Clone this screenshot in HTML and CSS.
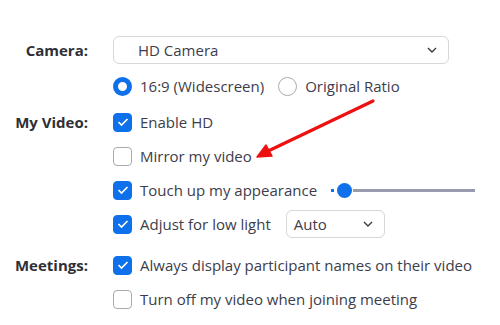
FILE: index.html
```html
<!DOCTYPE html>
<html lang="en">
<head>
    <meta charset="UTF-8">
    <meta name="viewport" content="width=device-width, initial-scale=1.0">
    <title>Video settings</title>
    <link rel="stylesheet" href="styles.css">
</head>
<body class="body">
    <div class="settings">
        <div class="settings__label settings__label_select">Camera:</div>
        <div class="settings__controls">
            <div class="select select_camera">
                <span class="select__value">HD Camera</span>
                <svg class="select__caret" width="10" height="6" viewBox="0 0 10 6"><path d="M1 1 L5 5 L9 1" fill="none" stroke="#3b3b46" stroke-width="1.4"/></svg>
            </div>
            <div class="ratio">
                <label class="option option_radio">
                    <span class="radio radio_checked"></span>
                    <span class="option__text">16:9 (Widescreen)</span>
                </label>
                <label class="option option_radio">
                    <span class="radio"></span>
                    <span class="option__text">Original Ratio</span>
                </label>
            </div>
        </div>

        <div class="settings__label">My Video:</div>
        <div class="settings__controls settings__controls_list">
            <label class="option">
                <span class="check check_on"><svg width="12" height="10" viewBox="0 0 12 10"><path d="M1.5 5 L4.5 8 L10.5 2" fill="none" stroke="#fff" stroke-width="1.6"/></svg></span>
                <span class="option__text">Enable HD</span>
            </label>
            <label class="option">
                <span class="check"></span>
                <span class="option__text">Mirror my video</span>
            </label>
            <label class="option">
                <span class="check check_on"><svg width="12" height="10" viewBox="0 0 12 10"><path d="M1.5 5 L4.5 8 L10.5 2" fill="none" stroke="#fff" stroke-width="1.6"/></svg></span>
                <span class="option__text">Touch up my appearance</span>
                <span class="slider">
                    <span class="slider__fill"></span>
                    <span class="slider__thumb"></span>
                    <span class="slider__track"></span>
                </span>
            </label>
            <label class="option">
                <span class="check check_on"><svg width="12" height="10" viewBox="0 0 12 10"><path d="M1.5 5 L4.5 8 L10.5 2" fill="none" stroke="#fff" stroke-width="1.6"/></svg></span>
                <span class="option__text">Adjust for low light</span>
                <span class="select select_small">
                    <span class="select__value">Auto</span>
                    <svg class="select__caret" width="10" height="6" viewBox="0 0 10 6"><path d="M1 1 L5 5 L9 1" fill="none" stroke="#3b3b46" stroke-width="1.4"/></svg>
                </span>
            </label>
        </div>

        <div class="settings__label settings__label_meetings">Meetings:</div>
        <div class="settings__controls settings__controls_list settings__controls_meetings">
            <label class="option">
                <span class="check check_on"><svg width="12" height="10" viewBox="0 0 12 10"><path d="M1.5 5 L4.5 8 L10.5 2" fill="none" stroke="#fff" stroke-width="1.6"/></svg></span>
                <span class="option__text">Always display participant names on their video</span>
            </label>
            <label class="option">
                <span class="check"></span>
                <span class="option__text">Turn off my video when joining meeting</span>
            </label>
        </div>
    </div>

    <svg class="arrow" width="500" height="325" viewBox="0 0 500 325">
        <line x1="373" y1="101" x2="264" y2="153" stroke="#ee1111" stroke-width="3.2" stroke-linecap="round"/>
        <path d="M257 157 L266 145 L272 156 Z" fill="#ee1111" stroke="#ee1111" stroke-width="1.5" stroke-linejoin="round"/>
    </svg>
</body>
</html>
```

FILE: styles.css
```css
* {
    margin: 0;
    padding: 0;
    box-sizing: border-box;
}

.body {
    width: 500px;
    height: 325px;
    overflow: hidden;
    background: #fff;
    font-family: "Open Sans", "Noto Sans", sans-serif;
    font-size: 15px;
    color: #3d3d4b;
    position: relative;
}

.settings {
    padding-top: 36px;
    display: grid;
    grid-template-columns: 88px 1fr;
    column-gap: 25px;
}

.settings__label {
    text-align: right;
    font-weight: 700;
    color: #2f2f36;
    height: 34px;
    line-height: 34px;
    margin-top: 5px;
}

.settings__label_select {
    height: 28px;
    line-height: 28px;
    margin-top: 0;
}

.settings__label_meetings {
    margin-top: 7px;
}

.settings__controls_list {
    display: flex;
    flex-direction: column;
    margin-top: 5px;
}

.settings__controls_meetings {
    margin-top: 7px;
}

.select {
    display: flex;
    align-items: center;
    justify-content: space-between;
    border: 1px solid #d6d6dc;
    border-radius: 6px;
    height: 28px;
    background: #fff;
}

.select_camera {
    width: 336px;
    padding: 0 11px 0 24px;
}

.select_small {
    width: 99px;
    height: 28px;
    margin-left: 15px;
    padding: 0 11px 0 7px;
}

.ratio {
    display: flex;
    margin-top: 8px;
    height: 28px;
    gap: 14px;
}

.option {
    display: flex;
    align-items: center;
    height: 34px;
}

.option_radio {
    height: 28px;
}

.option__text {
    margin-left: 8px;
    white-space: nowrap;
}

.radio {
    width: 19px;
    height: 19px;
    border-radius: 50%;
    border: 1.5px solid #a9a9b2;
    flex: none;
}

.radio_checked {
    border: 5.5px solid #0e71eb;
}

.check {
    width: 19px;
    height: 19px;
    border-radius: 4px;
    border: 1.5px solid #a9a9b2;
    flex: none;
    display: flex;
    align-items: center;
    justify-content: center;
}

.check_on {
    background: #0e71eb;
    border-color: #0e71eb;
}

.slider {
    display: flex;
    align-items: center;
    margin-left: 14px;
}

.slider__fill {
    width: 3px;
    height: 3px;
    background: #0e71eb;
    margin-right: 3px;
}

.slider__thumb {
    width: 15px;
    height: 15px;
    border-radius: 50%;
    background: #0e71eb;
    margin-right: 1px;
}

.slider__track {
    width: 122px;
    height: 3px;
    background: #9b9bb0;
}

.arrow {
    position: absolute;
    left: 0;
    top: 0;
    pointer-events: none;
}
```
